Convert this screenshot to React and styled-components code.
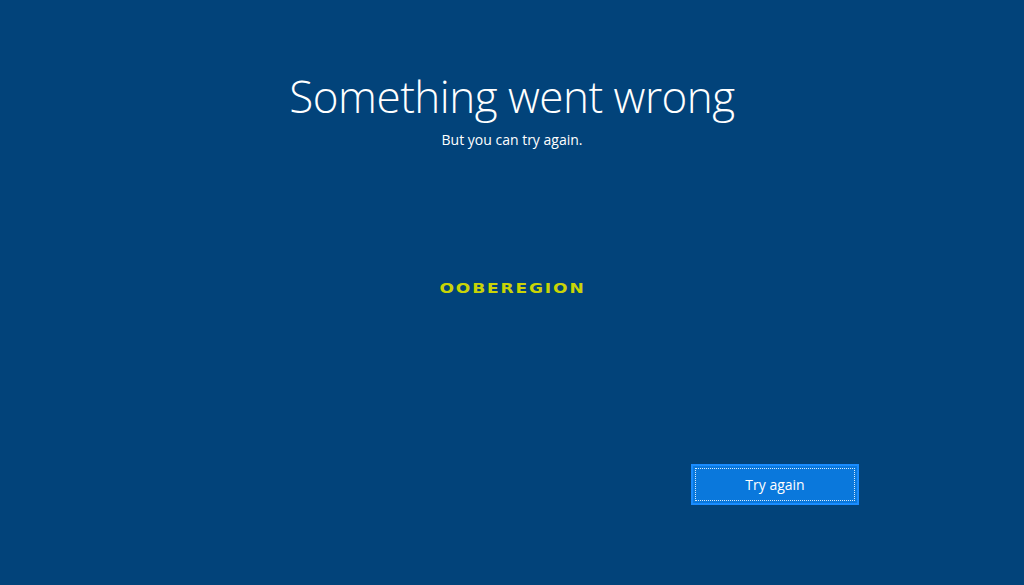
import React from "react";
import styled, { createGlobalStyle } from "styled-components";

const Global = createGlobalStyle`
  html, body { margin: 0; padding: 0; background: #02437a; }
  #root { width: 1024px; height: 585px; }
`;

const Screen = styled.main`
  width: 1024px;
  height: 585px;
  box-sizing: border-box;
  background: #02437a;
  display: flex;
  flex-direction: column;
  align-items: center;
  padding-top: 66px;
  font-family: "Open Sans", "Noto Sans", sans-serif;
  color: #ffffff;
`;

const Title = styled.h1`
  margin: 0;
  font-weight: 300;
  font-size: 44px;
  line-height: 60px;
  letter-spacing: -0.5px;
`;

const Subtitle = styled.p`
  margin: 4px 0 0;
  font-size: 14px;
  line-height: 20px;
  font-weight: 400;
`;

const Region = styled.div`
  margin-top: 130px;
  padding-left: 1.5px;
  font-family: "DejaVu Sans", sans-serif;
  font-weight: bold;
  font-size: 14px;
  letter-spacing: 1.5px;
  color: #c9d406;
  line-height: 16px;
  transform: scaleX(1.22);
`;

const Footer = styled.div`
  align-self: stretch;
  display: flex;
  justify-content: flex-end;
  padding-right: 165px;
  margin-top: 168px;
`;

const Button = styled.button`
  width: 168px;
  height: 41px;
  box-sizing: border-box;
  border: 2px solid #1a8cff;
  background: #0a78dc;
  padding: 2px;
  cursor: pointer;
  display: flex;
`;

const FocusRing = styled.span`
  flex: 1;
  display: flex;
  align-items: center;
  justify-content: center;
  border: 1px dotted rgba(255, 255, 255, 0.85);
  color: #ffffff;
  font-family: "Open Sans", "Noto Sans", sans-serif;
  font-size: 14px;
`;

export default function App() {
  return (
    <>
      <Global />
      <Screen>
        <Title>Something went wrong</Title>
        <Subtitle>But you can try again.</Subtitle>
        <Region>OOBEREGION</Region>
        <Footer>
          <Button>
            <FocusRing>Try again</FocusRing>
          </Button>
        </Footer>
      </Screen>
    </>
  );
}
